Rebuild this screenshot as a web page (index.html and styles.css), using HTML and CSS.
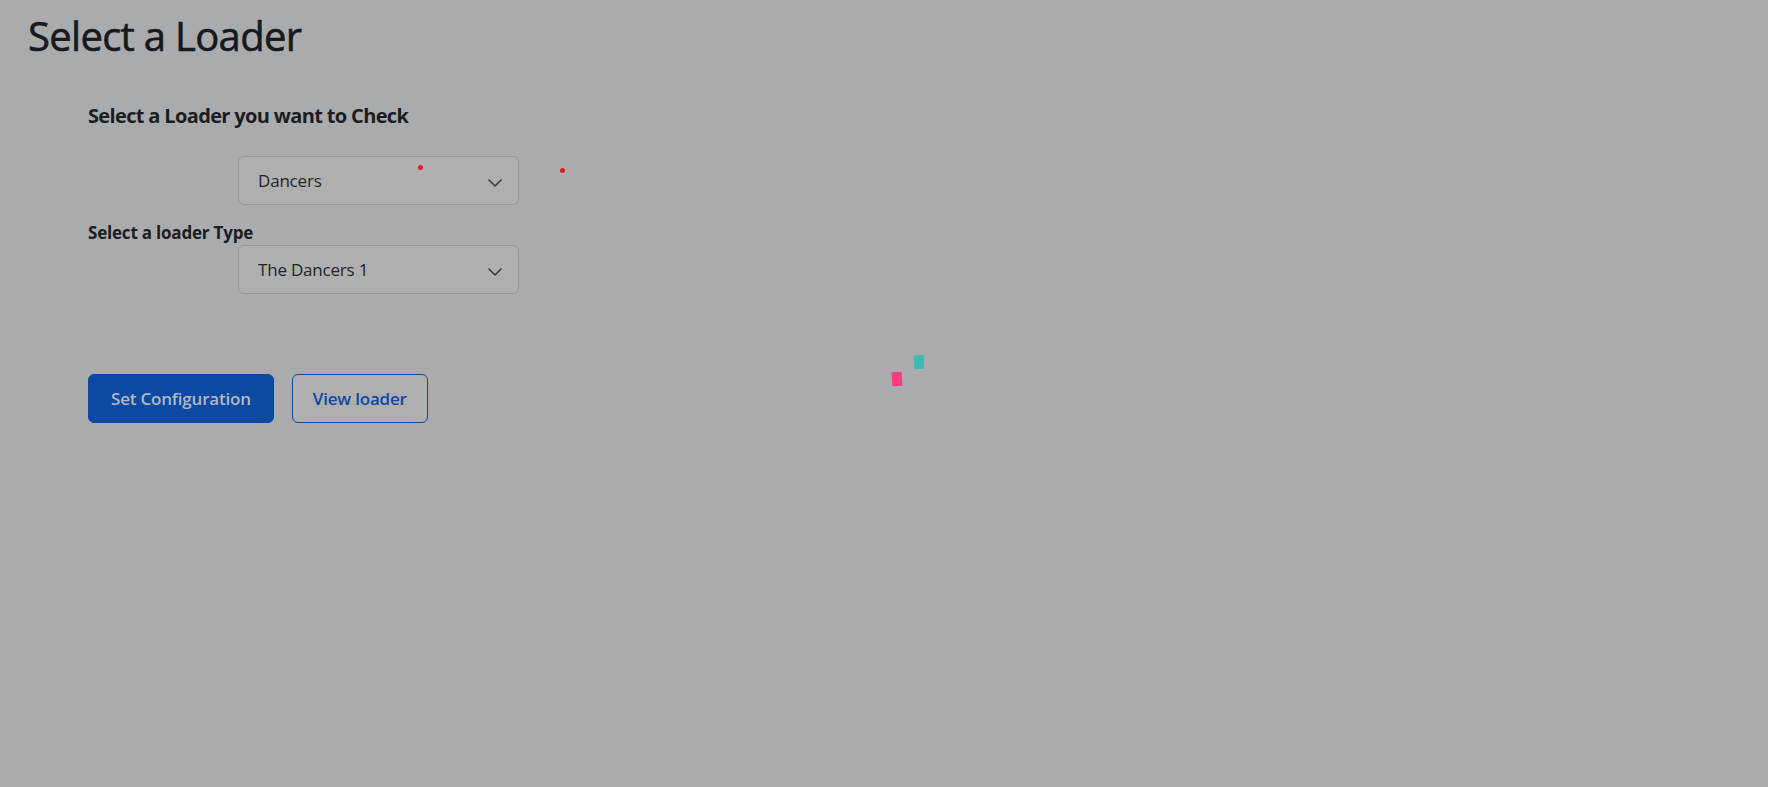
FILE: index.html
```html
<!DOCTYPE html>
<html lang="en">
<head>
<meta charset="utf-8">
<title>Select a Loader</title>
<link rel="stylesheet" href="styles.css">
</head>
<body>
<main class="page">
  <h1 class="title">Select a Loader</h1>
  <section class="config">
    <h5 class="section-title">Select a Loader you want to Check</h5>
    <div class="field-row">
      <div class="picker">
        <span class="picker-value">Dancers</span>
        <svg class="chevron" width="14" height="8" viewBox="0 0 14 8"><path d="M1 1 L7 7 L13 1" fill="none" stroke="#3a3d42" stroke-width="1.6" stroke-linecap="round" stroke-linejoin="round"/></svg>
      </div>
    </div>
    <div class="field-label">Select a loader Type</div>
    <div class="field-row">
      <div class="picker">
        <span class="picker-value">The Dancers 1</span>
        <svg class="chevron" width="14" height="8" viewBox="0 0 14 8"><path d="M1 1 L7 7 L13 1" fill="none" stroke="#3a3d42" stroke-width="1.6" stroke-linecap="round" stroke-linejoin="round"/></svg>
      </div>
    </div>
    <div class="actions">
      <button class="btn btn-primary">Set Configuration</button>
      <button class="btn btn-outline">View loader</button>
    </div>
  </section>
</main>
<div class="loader-stage">
  <span class="dot dot-a"></span>
  <span class="dot dot-b"></span>
  <span class="dancer dancer-pink"></span>
  <span class="dancer dancer-teal"></span>
</div>
</body>
</html>
```
FILE: styles.css
```css
html, body {
  margin: 0;
  padding: 0;
  background: #aaabad;
  height: 100%;
}
body {
  font-family: "Open Sans", "Noto Sans", sans-serif;
  color: #1b1d20;
  overflow: hidden;
}
.page {
  padding: 12px 0 0 28px;
}
.title {
  margin: 0;
  font-size: 40px;
  line-height: 48px;
  font-weight: 400;
  color: #17191c;
  letter-spacing: -0.7px;
  -webkit-text-stroke: 0.6px #17191c;
}
.config {
  margin-left: 60px;
}
.section-title {
  margin: 44px 0 0 0;
  font-size: 20px;
  line-height: 24px;
  font-weight: 700;
  color: #1b1d20;
  letter-spacing: -0.65px;
}
.field-row {
  padding-left: 150px;
}
.section-title + .field-row {
  margin-top: 28px;
}
.picker {
  box-sizing: border-box;
  width: 281px;
  height: 49px;
  border: 1px solid #95979a;
  border-radius: 6px;
  background: #afafb0;
  display: flex;
  align-items: center;
  justify-content: space-between;
  padding: 0 16px 0 19px;
}
.picker-value {
  font-size: 17px;
  line-height: 27px;
  color: #232528;
  letter-spacing: -0.2px;
}
.chevron {
  display: block;
  margin-top: 4px;
}
.field-label {
  margin: 18px 0 2px 0;
  font-size: 17px;
  line-height: 20px;
  font-weight: 700;
  color: #1b1d20;
  letter-spacing: -0.2px;
}
.actions {
  margin-top: 80px;
  display: flex;
  gap: 18px;
}
.btn {
  box-sizing: border-box;
  height: 49px;
  padding: 0 22px;
  border-radius: 6px;
  font-family: "Open Sans", "Noto Sans", sans-serif;
  font-size: 17px;
  font-weight: 600;
  letter-spacing: -0.2px;
  cursor: pointer;
}
.btn-primary {
  background: #0b49a2;
  border: 1px solid #0b49a2;
  color: #b4b8c1;
}
.btn-outline {
  padding: 0 20px;
  background: #afafb0;
  border: 1px solid #0d4aa2;
  color: #0e49a1;
}
.loader-stage {
  position: fixed;
  inset: 0;
  pointer-events: none;
}
.dot {
  position: absolute;
  width: 5px;
  height: 5px;
  border-radius: 50%;
  background: #ee1a22;
}
.dot-a { left: 418px; top: 165px; }
.dot-b { left: 560px; top: 168px; }
.dancer {
  position: absolute;
  width: 10px;
  height: 14px;
}
.dancer-pink {
  left: 892px;
  top: 372px;
  background: #fd3b7e;
  transform: rotate(-3deg);
}
.dancer-teal {
  left: 914px;
  top: 355px;
  background: #3cbcb0;
  transform: rotate(-2deg);
}
```
